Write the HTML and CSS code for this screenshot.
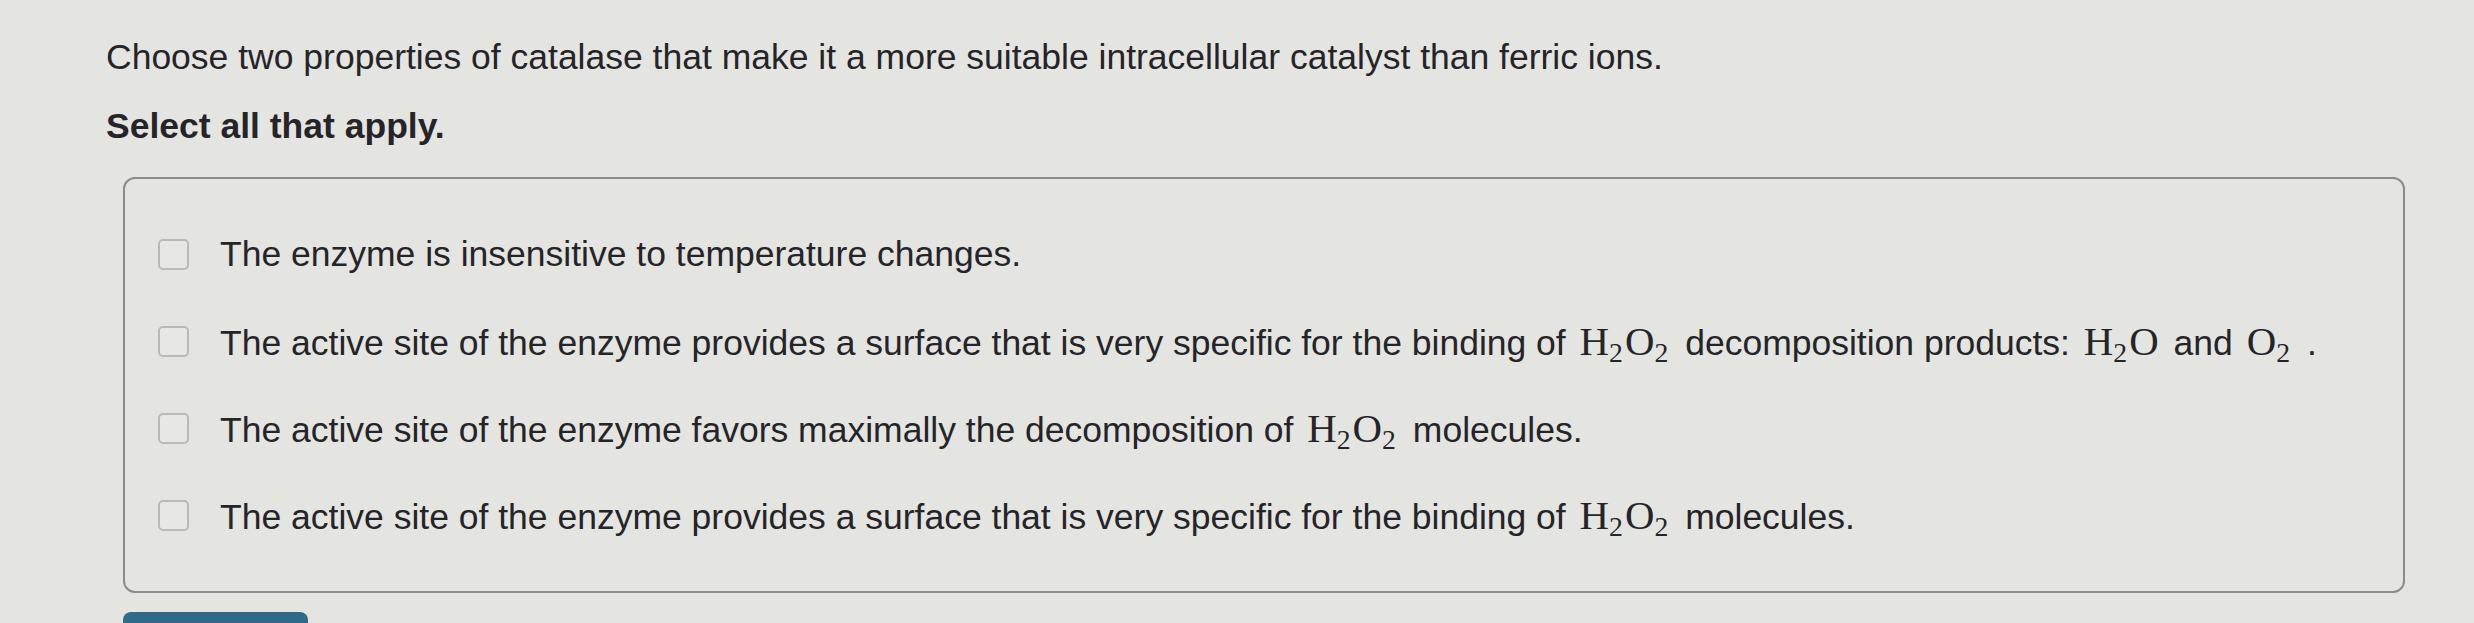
FILE: index.html
```html
<!DOCTYPE html>
<html>
<head>
<meta charset="utf-8">
<link rel="stylesheet" href="styles.css">
</head>
<body>
<div class="page">
  <p class="prompt">Choose two properties of catalase that make it a more suitable intracellular catalyst than ferric ions.</p>
  <p class="instruction">Select all that apply.</p>
  <div class="choices">
    <label class="choice"><span class="box"></span><span class="text">The enzyme is insensitive to temperature changes.</span></label>
    <label class="choice"><span class="box"></span><span class="text">The active site of the enzyme provides a surface that is very specific for the binding of <span class="math">H<sub>2</sub>O<sub>2</sub></span> decomposition products: <span class="math">H<sub>2</sub>O</span> and <span class="math">O<sub>2</sub></span> .</span></label>
    <label class="choice"><span class="box"></span><span class="text">The active site of the enzyme favors maximally the decomposition of <span class="math">H<sub>2</sub>O<sub>2</sub></span> molecules.</span></label>
    <label class="choice"><span class="box"></span><span class="text">The active site of the enzyme provides a surface that is very specific for the binding of <span class="math">H<sub>2</sub>O<sub>2</sub></span> molecules.</span></label>
  </div>
  <div class="submit"></div>
</div>
</body>
</html>
```
FILE: styles.css
```css
html, body {
  margin: 0;
  padding: 0;
  height: 623px;
  overflow: hidden;
  background: #e4e4e1;
}
.page {
  padding: 36px 0 0 106px;
  font-family: "Liberation Sans", Arial, sans-serif;
  color: #252429;
}
.prompt {
  margin: 0;
  font-size: 35.5px;
  line-height: 42px;
}
.instruction {
  margin: 27px 0 0;
  font-size: 35.5px;
  line-height: 42px;
  font-weight: bold;
}
.choices {
  margin: 30px 0 0 17px;
  width: 2282px;
  height: 416px;
  box-sizing: border-box;
  border: 2px solid #8c8c8b;
  border-radius: 12px;
  padding: 32px 0 0 33px;
  display: flex;
  flex-direction: column;
}
.choice {
  display: flex;
  align-items: center;
  gap: 31px;
  height: 87px;
  font-size: 35.5px;
}
.box {
  flex: none;
  width: 31px;
  height: 31px;
  box-sizing: border-box;
  border: 2px solid #b9b9b7;
  border-radius: 5px;
  background: #e7e7e5;
}
.text {
  white-space: nowrap;
}
.math {
  font-family: "Liberation Serif", "DejaVu Serif", serif;
  font-size: 1.15em;
  margin: 0 5px 0 4px;
}
.math sub {
  font-size: 0.68em;
  vertical-align: -0.25em;
  line-height: 0;
  margin-right: 2px;
}
.submit {
  margin: 19px 0 0 17px;
  width: 185px;
  height: 11px;
  background: #2f6b88;
  border-radius: 8px 8px 0 0;
}
```
